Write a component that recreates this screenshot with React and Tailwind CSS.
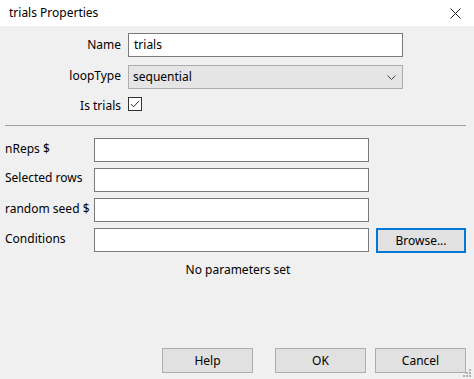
export default function App() {
  const font = { fontFamily: '"Noto Sans", "Open Sans", sans-serif' };
  return (
    <div className="w-[474px] h-[379px] bg-[#f0f0f0] flex flex-col text-[12px] text-black relative overflow-hidden" style={font}>
      <div className="h-[26px] bg-white flex items-center justify-between pl-[9px] pr-[12px] shrink-0">
        <span className="text-[12px] leading-none">trials Properties</span>
        <svg width="11" height="11" viewBox="0 0 11 11" className="mr-[1px]">
          <path d="M0.5 0.5 L10.5 10.5 M10.5 0.5 L0.5 10.5" stroke="#222" strokeWidth="1" />
        </svg>
      </div>

      <div className="grid grid-cols-[121px_275px] gap-x-[7px] gap-y-[8px] pt-[7px]">
        <div className="text-right leading-none pt-[6px]">Name</div>
        <div className="h-[24px] bg-white border border-[#7a7a7a] flex items-center px-[5px] leading-none">trials</div>
        <div className="text-right leading-none pt-[5px]">loopType</div>
        <div className="h-[24px] bg-[#e5e5e5] border border-[#adadad] flex items-center justify-between pl-[4px] pr-[6px] leading-none">
          <span>sequential</span>
          <svg width="9" height="5" viewBox="0 0 9 5">
            <path d="M0.5 0.5 L4.5 4.5 L8.5 0.5" stroke="#444" strokeWidth="1" fill="none" />
          </svg>
        </div>
        <div className="text-right leading-none pt-[3px]">Is trials</div>
        <div className="h-[14px] flex items-center">
          <div className="w-[14px] h-[14px] border border-[#333] bg-white flex items-center justify-center">
            <svg width="10" height="8" viewBox="0 0 10 8">
              <path d="M0.8 4 L3.6 6.8 L9.2 0.8" stroke="#333" strokeWidth="1" fill="none" />
            </svg>
          </div>
        </div>
      </div>

      <div className="ml-[5px] mr-[8px] mt-[13px] h-px bg-[#a0a0a0]" />

      <div className="grid grid-cols-[89px_275px_97px] gap-y-[6px] pt-[12px] pl-[5px]">
        <div className="leading-none pt-[5px] whitespace-nowrap">nReps $</div>
        <div className="h-[24px] bg-white border border-[#7a7a7a]" />
        <div />
        <div className="leading-none pt-[4px] whitespace-nowrap">Selected rows</div>
        <div className="h-[24px] bg-white border border-[#7a7a7a]" />
        <div />
        <div className="leading-none pt-[5px] whitespace-nowrap">random seed $</div>
        <div className="h-[24px] bg-white border border-[#7a7a7a]" />
        <div />
        <div className="leading-none pt-[5px] whitespace-nowrap">Conditions</div>
        <div className="h-[24px] bg-white border border-[#7a7a7a]" />
        <div className="h-[25px] ml-[7px] w-[90px] bg-[#e1e1e1] border border-[#0078d7] shadow-[inset_0_0_0_1px_#0078d7] flex items-center justify-center leading-none">Browse...</div>
      </div>

      <div className="text-center leading-none mt-[11px] pl-[2px]">No parameters set</div>

      <div className="flex-1" />

      <div className="flex justify-end pr-[8px] pb-[6px]">
        <div className="w-[91px] h-[25px] bg-[#e1e1e1] border border-[#adadad] flex items-center justify-center leading-none">Help</div>
        <div className="w-[91px] h-[25px] ml-[22px] bg-[#e1e1e1] border border-[#adadad] flex items-center justify-center leading-none">OK</div>
        <div className="w-[91px] h-[25px] ml-[9px] bg-[#e1e1e1] border border-[#adadad] flex items-center justify-center leading-none">Cancel</div>
      </div>

      <svg width="9" height="9" viewBox="0 0 9 9" className="absolute right-[2px] bottom-[1px]">
        <g fill="#b0b0b0">
          <rect x="6" y="0" width="2" height="2" />
          <rect x="3" y="3" width="2" height="2" />
          <rect x="6" y="3" width="2" height="2" />
          <rect x="0" y="6" width="2" height="2" />
          <rect x="3" y="6" width="2" height="2" />
          <rect x="6" y="6" width="2" height="2" />
        </g>
      </svg>
    </div>
  );
}
